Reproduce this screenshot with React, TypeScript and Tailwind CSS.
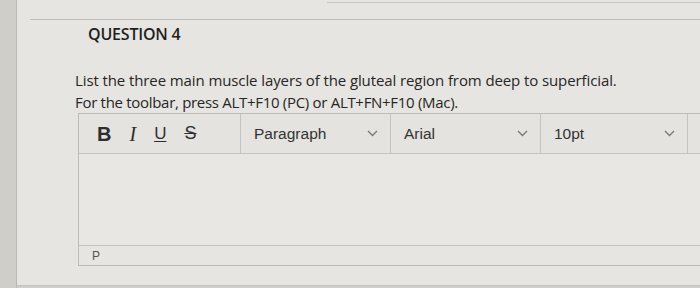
const Chevron = () => (
  <svg width="11" height="7" viewBox="0 0 11 7" className="shrink-0">
    <polyline points="1,1 5.5,5.5 10,1" fill="none" stroke="#7a7a78" strokeWidth="1.4" />
  </svg>
);

const Dropdown = ({ label, width }: { label: string; width: string }) => (
  <div className={`${width} flex items-center justify-between pl-[13px] pr-[12px] border-r border-[#c4c3bf]`}>
    <span className="text-[15.5px] text-[#333]">{label}</span>
    <Chevron />
  </div>
);

export default function App() {
  return (
    <div className="w-[700px] h-[288px] overflow-hidden flex bg-[#d3d2cd] font-['Open_Sans',sans-serif]">
      <div className="w-[17px] shrink-0 bg-[#cfcec9] border-r border-[#bab9b4]" />
      <div className="flex-1 flex flex-col bg-[#e6e5e1] min-w-0">
        <div className="ml-[310px] mt-[2px] h-px bg-[#c9c8c4]" />
        <div className="ml-[13px] mt-[16px] h-px bg-[#bebdb9]" />
        <div className="ml-[71px] mt-[4px] text-[16px] leading-[20px] font-semibold text-[#1f1f1f] tracking-[-0.2px]">
          QUESTION 4
        </div>
        <div className="ml-[58px] mt-[25px] text-[15px] leading-[22px] text-[#262626]">
          <p className="tracking-[-0.1px]">List the three main muscle layers of the gluteal region from deep to superficial.</p>
          <p className="tracking-[-0.3px]">For the toolbar, press ALT+F10 (PC) or ALT+FN+F10 (Mac).</p>
        </div>
        <div className="ml-[61px] border border-r-0 border-[#bdbcb8] font-['Liberation_Sans',sans-serif]">
          <div className="h-[40px] flex border-b border-[#c4c3bf] bg-[#e4e3df]">
            <div className="w-[162px] flex items-center gap-[18px] pl-[18px] border-r border-[#c4c3bf] text-[#2e2e2e]">
              <span className="text-[20px] font-bold">B</span>
              <span className="text-[20px] italic font-['Liberation_Serif',serif]">I</span>
              <span className="text-[17px] underline underline-offset-2">U</span>
              <span className="text-[18px] line-through">S</span>
            </div>
            <Dropdown label="Paragraph" width="w-[150px]" />
            <Dropdown label="Arial" width="w-[150px]" />
            <Dropdown label="10pt" width="w-[147px]" />
            <div className="flex-1" />
          </div>
          <div className="h-[91px] bg-[#e8e7e3]" />
          <div className="h-[20px] border-t border-[#c4c3bf] flex items-center pl-[13px] text-[12px] text-[#555]">
            P
          </div>
        </div>
        <div className="mt-auto h-[3px] bg-[#cfcec9] border-t border-[#c3c2be]" />
      </div>
    </div>
  );
}
